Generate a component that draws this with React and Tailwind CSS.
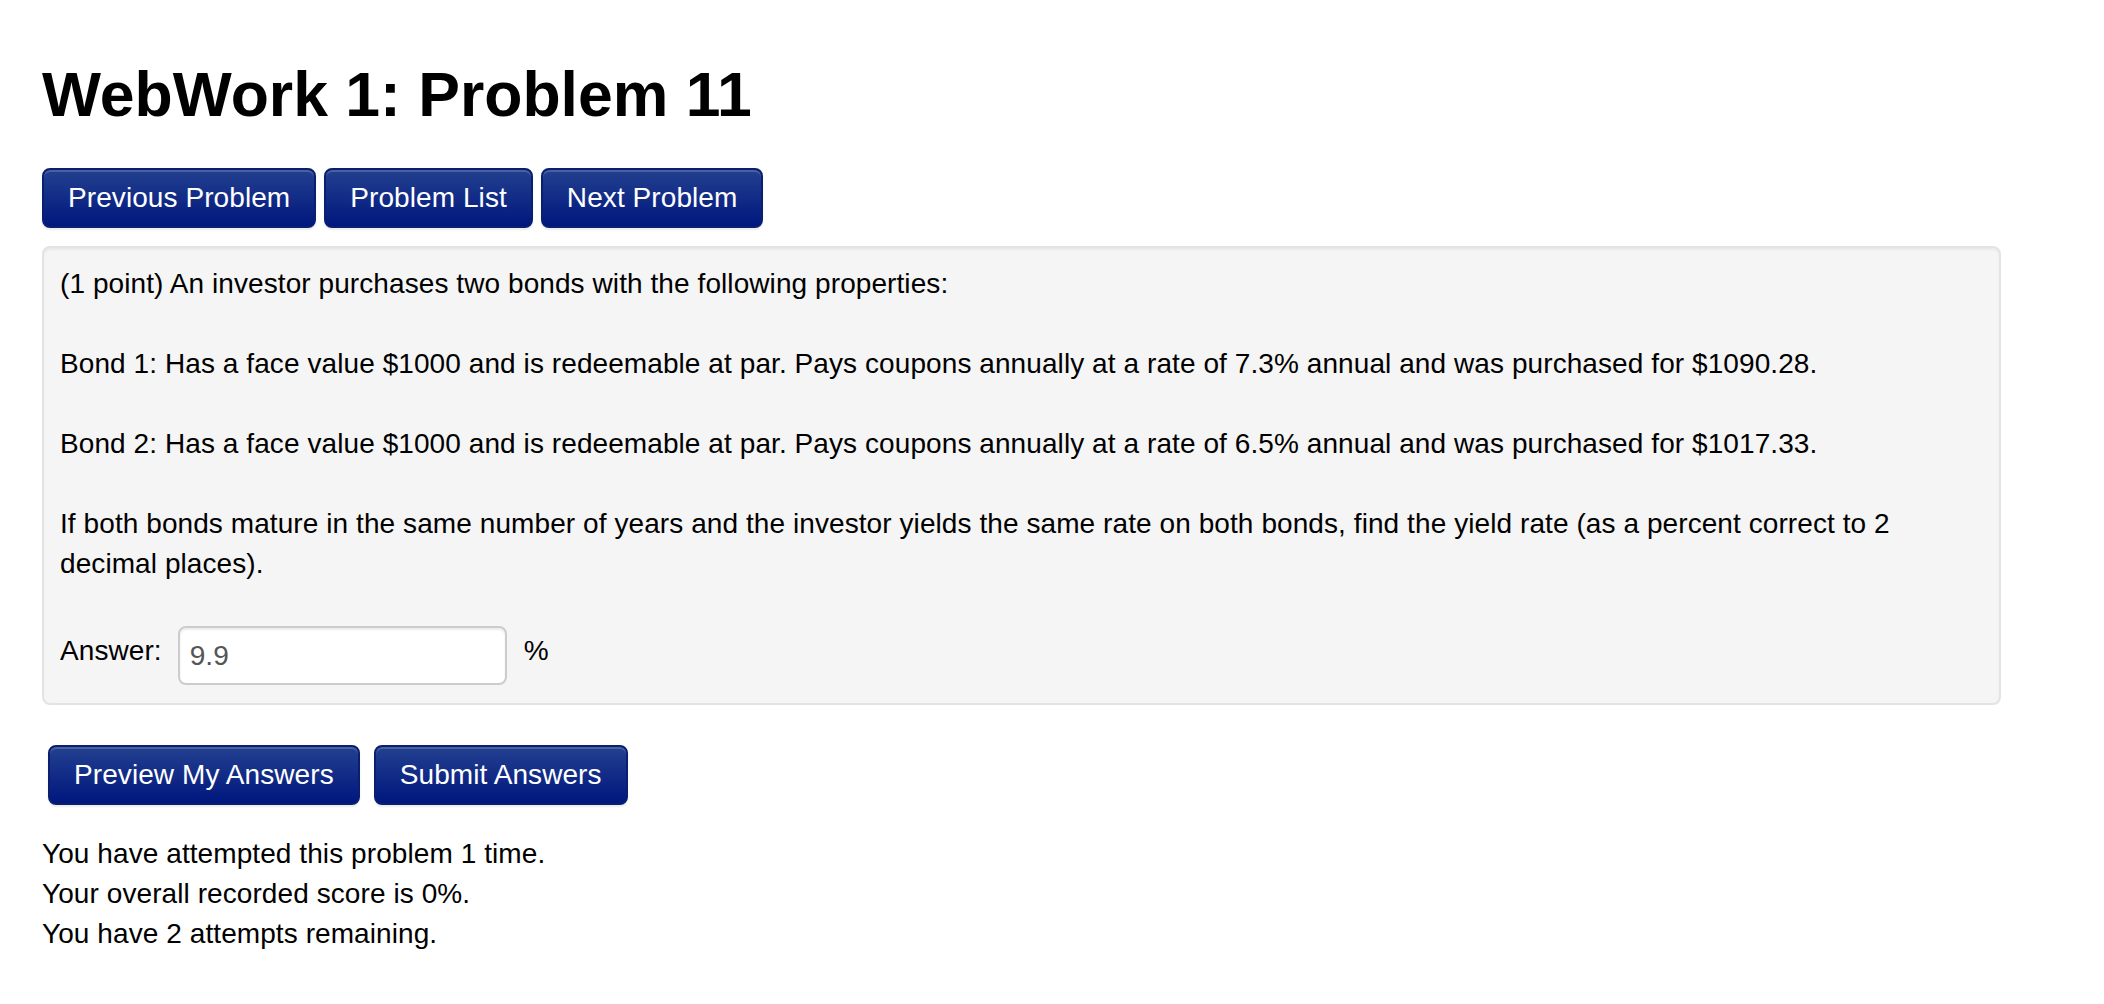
export default function App() {
  const btn =
    "h-[60px] px-[24px] py-[8px] leading-[40px] text-[28px] tracking-[0.08px] text-white rounded-[8px] border-2 border-[#0b1f70] bg-[linear-gradient(to_bottom,#23408f,#00177e)] shadow-[inset_0_2px_0_rgba(255,255,255,0.18),0_2px_2px_rgba(0,0,0,0.08)] whitespace-nowrap";
  return (
    <div className="min-h-screen bg-white px-[42px] pb-[40px] font-['Liberation_Sans',Arial,Helvetica,sans-serif] text-[28px] leading-[40px] tracking-[0.08px] text-black">
      <h1 className="pt-[54px] text-[62.5px] font-bold leading-[80px] tracking-normal">WebWork 1: Problem 11</h1>
      <div className="mt-[34px] flex gap-[8px]">
        <button className={btn}>Previous Problem</button>
        <button className={btn}>Problem List</button>
        <button className={btn}>Next Problem</button>
      </div>
      <div className="mt-[18px] w-[1959px] rounded-[8px] border-2 border-[#e3e3e3] bg-[#f5f5f5] px-[16px] pt-[16px] pb-[17px] shadow-[inset_0_2px_2px_rgba(0,0,0,0.05)]">
        <p>(1 point) An investor purchases two bonds with the following properties:</p>
        <p className="mt-[40px]">
          Bond 1: Has a face value $1000 and is redeemable at par. Pays coupons annually at a rate of 7.3% annual and was purchased for $1090.28.
        </p>
        <p className="mt-[40px]">
          Bond 2: Has a face value $1000 and is redeemable at par. Pays coupons annually at a rate of 6.5% annual and was purchased for $1017.33.
        </p>
        <p className="mt-[40px]">
          If both bonds mature in the same number of years and the investor yields the same rate on both bonds, find the yield rate (as a percent correct to 2 decimal places).
        </p>
        <div className="mt-[42px] flex h-[60px] items-start">
          <span className="mt-[5px]">Answer:</span>
          <input
            readOnly
            value="9.9"
            className="ml-[16px] h-[59px] w-[329px] rounded-[8px] border-2 border-[#cccccc] bg-white px-[10px] text-[28px] leading-[40px] text-[#555555] shadow-[inset_0_2px_2px_rgba(0,0,0,0.075)] outline-none font-['Liberation_Sans',Arial,sans-serif]"
          />
          <span className="ml-[17px] mt-[5px]">%</span>
        </div>
      </div>
      <div className="mt-[40px] ml-[6px] flex gap-[14px]">
        <button className={btn}>Preview My Answers</button>
        <button className={btn}>Submit Answers</button>
      </div>
      <div className="mt-[29px]">
        <div>You have attempted this problem 1 time.</div>
        <div>Your overall recorded score is 0%.</div>
        <div>You have 2 attempts remaining.</div>
      </div>
    </div>
  );
}
